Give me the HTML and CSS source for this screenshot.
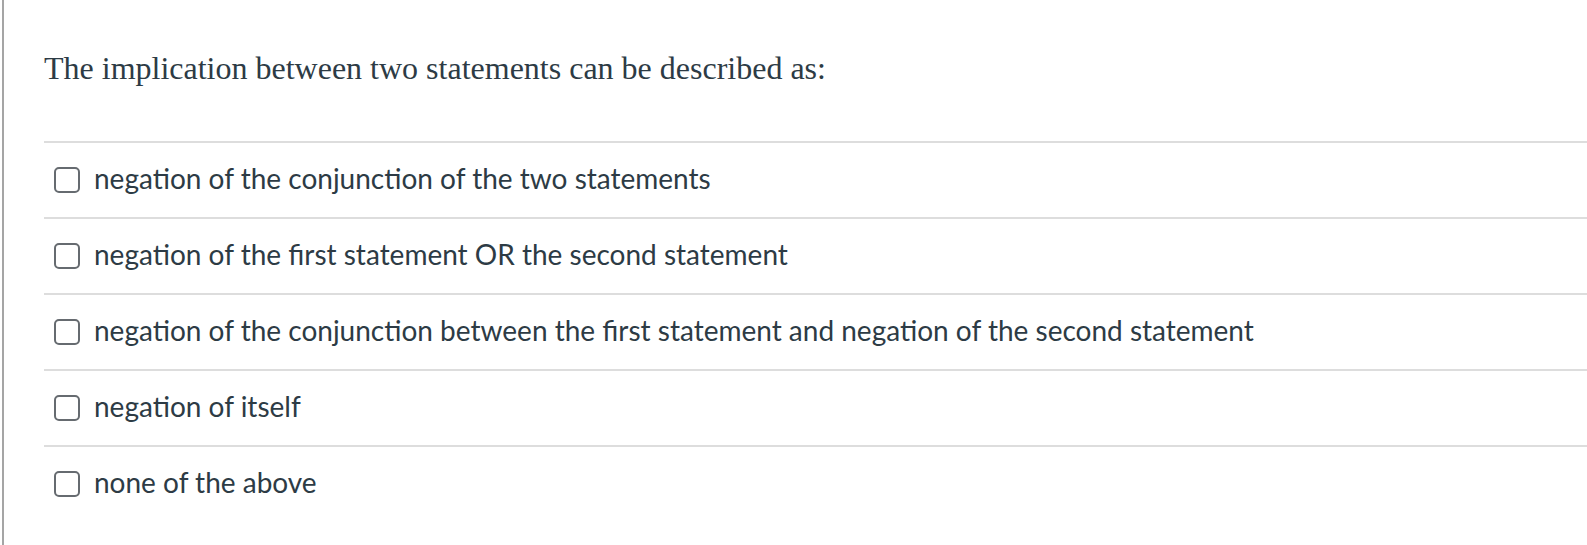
FILE: index.html
```html
<!DOCTYPE html>
<html lang="en">
<head>
    <meta charset="UTF-8">
    <title>Quiz Question</title>
    <link rel="stylesheet" href="styles.css">
</head>
<body>
    <div class="question">
        <p class="question-text">The implication between two statements can be described as:</p>

        <div class="answers">
            <label class="answer">
                <span class="checkbox"></span>
                <span class="answer-text">negation of the conjunction of the two statements</span>
            </label>
            <label class="answer">
                <span class="checkbox"></span>
                <span class="answer-text">negation of the first statement OR the second statement</span>
            </label>
            <label class="answer">
                <span class="checkbox"></span>
                <span class="answer-text">negation of the conjunction between the first statement and negation of the second statement</span>
            </label>
            <label class="answer">
                <span class="checkbox"></span>
                <span class="answer-text">negation of itself</span>
            </label>
            <label class="answer">
                <span class="checkbox"></span>
                <span class="answer-text">none of the above</span>
            </label>
        </div>
    </div>
</body>
</html>
```

FILE: styles.css
```css
body {
    margin: 0;
    padding: 0;
    background-color: #fff;
    color: #2d3b45;
}
.question {
    margin-left: 2px;
    border-left: 2px solid #a5a5a5;
    padding: 0 0 0 40px;
    min-height: 545px;
    box-sizing: border-box;
}
.question-text {
    margin: 0;
    padding-top: 48px;
    height: 141px;
    box-sizing: border-box;
    font-family: "Liberation Serif", "Times New Roman", serif;
    font-size: 32px;
    line-height: 40px;
    color: #2d3b45;
}
.answer {
    display: flex;
    align-items: center;
    gap: 14px;
    height: 76px;
    padding-left: 10px;
    border-top: 2px solid #ddd;
    box-sizing: border-box;
    cursor: pointer;
}
.checkbox {
    width: 26px;
    height: 26px;
    border: 2px solid #666b70;
    border-radius: 5px;
    box-sizing: border-box;
    flex-shrink: 0;
}
.answer-text {
    padding-bottom: 4px;
    font-family: Lato, "Noto Sans", sans-serif;
    font-size: 28px;
    line-height: 34px;
}
```
